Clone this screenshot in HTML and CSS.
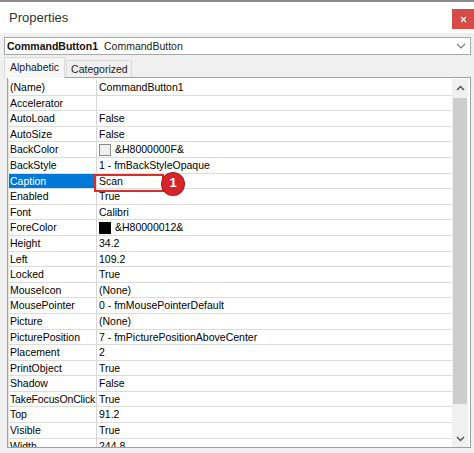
FILE: index.html
```html
<!DOCTYPE html>
<html>
<head>
<meta charset="utf-8">
<link rel="stylesheet" href="styles.css">
</head>
<body>
<div class="window">
  <div class="topline"></div>
  <header class="titlebar">
    <span class="title">Properties</span>
    <div class="close"><svg width="7" height="7" viewBox="0 0 7 7"><path d="M1 1L6 6M6 1L1 6" stroke="#fff" stroke-width="1.2"/></svg></div>
  </header>
  <div class="content">
    <div class="combo">
      <span class="obj-name">CommandButton1</span>
      <span class="obj-type">CommandButton</span>
      <svg class="combo-arrow" width="10" height="6" viewBox="0 0 10 6"><path d="M1 1L5 5L9 1" fill="none" stroke="#7a7a7a" stroke-width="1.1"/></svg>
    </div>
    <div class="tabs">
      <div class="tab active">Alphabetic</div>
      <div class="tab">Categorized</div>
    </div>
    <div class="gridbox">
      <div class="rows">
        <div class="row"><div class="name">(Name)</div><div class="value">CommandButton1</div></div>
        <div class="row"><div class="name">Accelerator</div><div class="value"></div></div>
        <div class="row"><div class="name">AutoLoad</div><div class="value">False</div></div>
        <div class="row"><div class="name">AutoSize</div><div class="value">False</div></div>
        <div class="row"><div class="name">BackColor</div><div class="value"><span class="swatch light"></span>&amp;H8000000F&amp;</div></div>
        <div class="row"><div class="name">BackStyle</div><div class="value">1 - fmBackStyleOpaque</div></div>
        <div class="row selected"><div class="name">Caption</div><div class="value marked">Scan<span class="redbox"></span><span class="badge">1</span></div></div>
        <div class="row"><div class="name">Enabled</div><div class="value">True</div></div>
        <div class="row"><div class="name">Font</div><div class="value">Calibri</div></div>
        <div class="row"><div class="name">ForeColor</div><div class="value"><span class="swatch dark"></span>&amp;H80000012&amp;</div></div>
        <div class="row"><div class="name">Height</div><div class="value">34.2</div></div>
        <div class="row"><div class="name">Left</div><div class="value">109.2</div></div>
        <div class="row"><div class="name">Locked</div><div class="value">True</div></div>
        <div class="row"><div class="name">MouseIcon</div><div class="value">(None)</div></div>
        <div class="row"><div class="name">MousePointer</div><div class="value">0 - fmMousePointerDefault</div></div>
        <div class="row"><div class="name">Picture</div><div class="value">(None)</div></div>
        <div class="row"><div class="name">PicturePosition</div><div class="value">7 - fmPicturePositionAboveCenter</div></div>
        <div class="row"><div class="name">Placement</div><div class="value">2</div></div>
        <div class="row"><div class="name">PrintObject</div><div class="value">True</div></div>
        <div class="row"><div class="name">Shadow</div><div class="value">False</div></div>
        <div class="row"><div class="name tight">TakeFocusOnClick</div><div class="value">True</div></div>
        <div class="row"><div class="name">Top</div><div class="value">91.2</div></div>
        <div class="row"><div class="name">Visible</div><div class="value">True</div></div>
        <div class="row"><div class="name">Width</div><div class="value">244.8</div></div>
      </div>
      <div class="scrollbar">
        <div class="sb-btn"><svg width="9" height="6" viewBox="0 0 9 6"><path d="M1 5L4.5 1.5L8 5" fill="none" stroke="#555" stroke-width="1.5"/></svg></div>
        <div class="sb-thumb"></div>
        <div class="sb-track"></div>
        <div class="sb-btn"><svg width="9" height="6" viewBox="0 0 9 6"><path d="M1 1L4.5 4.5L8 1" fill="none" stroke="#555" stroke-width="1.5"/></svg></div>
      </div>
    </div>
  </div>
</div>
</body>
</html>
```

FILE: styles.css
```css
* { box-sizing: border-box; }
html, body { margin: 0; padding: 0; }
body { width: 474px; height: 453px; overflow: hidden; }

.window {
  width: 474px;
  height: 453px;
  background: #f0f0f0;
  display: flex;
  flex-direction: column;
  font-family: "Liberation Sans", Arial, sans-serif;
  font-size: 10.5px;
  color: #000;
  overflow: hidden;
}

.topline { height: 2px; background: #8c8c8c; flex: none; }

.titlebar {
  height: 31px;
  flex: none;
  background: #fff;
  display: flex;
  align-items: flex-start;
  justify-content: space-between;
  padding-left: 9px;
}
.title {
  font-size: 13px;
  color: #333;
  line-height: 31px;
}
.close {
  margin-top: 7px;
  width: 22px;
  height: 20px;
  background: #d64b47;
  display: flex;
  align-items: center;
  justify-content: center;
}

.content {
  flex: 1;
  display: flex;
  flex-direction: column;
  padding: 4px 3px 0 4px;
  min-height: 0;
}

.combo {
  flex: none;
  height: 18px;
  border: 1px solid #a9a9a9;
  background: #fff;
  display: flex;
  align-items: center;
  padding: 0 4px 0 2px;
}
.obj-name { font-weight: bold; color: #111; }
.obj-type { margin-left: 6px; color: #222; }
.combo-arrow { margin-left: auto; }

.tabs {
  flex: none;
  height: 20px;
  margin-top: 2px;
  display: flex;
  align-items: flex-end;
}
.tab {
  height: 17px;
  padding: 0 3px 0 4px;
  border: 1px solid #d9d9d9;
  border-bottom: none;
  background: #f0f0f0;
  display: flex;
  align-items: center;
  margin-left: 1px;
  color: #222;
}
.tab.active {
  height: 21px;
  margin-left: 0;
  margin-bottom: -1px;
  padding: 0 5px 2px 5px;
  background: #f7f7f7;
  position: relative;
  z-index: 1;
}

.gridbox {
  flex: none;
  height: 371px;
  margin-left: 3px;
  border: 1px solid #a0a0a0;
  background: #fff;
  display: flex;
  padding: 1px 2px 0 0;
  overflow: hidden;
}

.rows {
  flex: 1;
  min-width: 0;
  overflow: hidden;
  padding-top: 1px;
  border-left: 1px solid #e2e2e2;
}

.row {
  display: grid;
  grid-template-columns: 88px 1fr;
  height: 15.6px;
  border-bottom: 1px solid #dcdcdc;
  line-height: 14.6px;
  white-space: nowrap;
}
.name {
  padding-left: 1px;
  border-right: 1px solid #d6d6d6;
  overflow: hidden;
}
.name.tight { letter-spacing: -0.15px; }
.value {
  padding-left: 2px;
  display: flex;
  align-items: center;
  overflow: visible;
}
.row.selected .name { background: #0078d7; color: #fff; }

.swatch {
  display: inline-block;
  width: 12px;
  height: 12px;
  margin-right: 4px;
  border: 1px solid #8a8a8a;
}
.swatch.light { background: #f0f0f0; }
.swatch.dark { background: #000; border-color: #000; }

.marked { position: relative; }
.redbox {
  position: absolute;
  left: -3px;
  top: 0;
  width: 70px;
  height: 18px;
  border: 2px solid #dc2b2b;
}
.badge {
  position: absolute;
  left: 65px;
  top: -1px;
  width: 22px;
  height: 22px;
  border-radius: 50%;
  background: #d5252b;
  box-shadow: 0 0 0 1px #a81c20;
  color: #fff;
  font-weight: bold;
  font-size: 13px;
  display: flex;
  align-items: center;
  justify-content: center;
  z-index: 2;
}

.scrollbar {
  flex: none;
  width: 16px;
  background: #f0f0f0;
  display: flex;
  flex-direction: column;
}
.sb-btn {
  flex: none;
  height: 17px;
  display: flex;
  align-items: center;
  justify-content: center;
}
.sb-thumb {
  flex: none;
  height: 306px;
  margin: 2px 1px 0 1px;
  background: #cdcdcd;
}
.sb-track { flex: 1; }
```
